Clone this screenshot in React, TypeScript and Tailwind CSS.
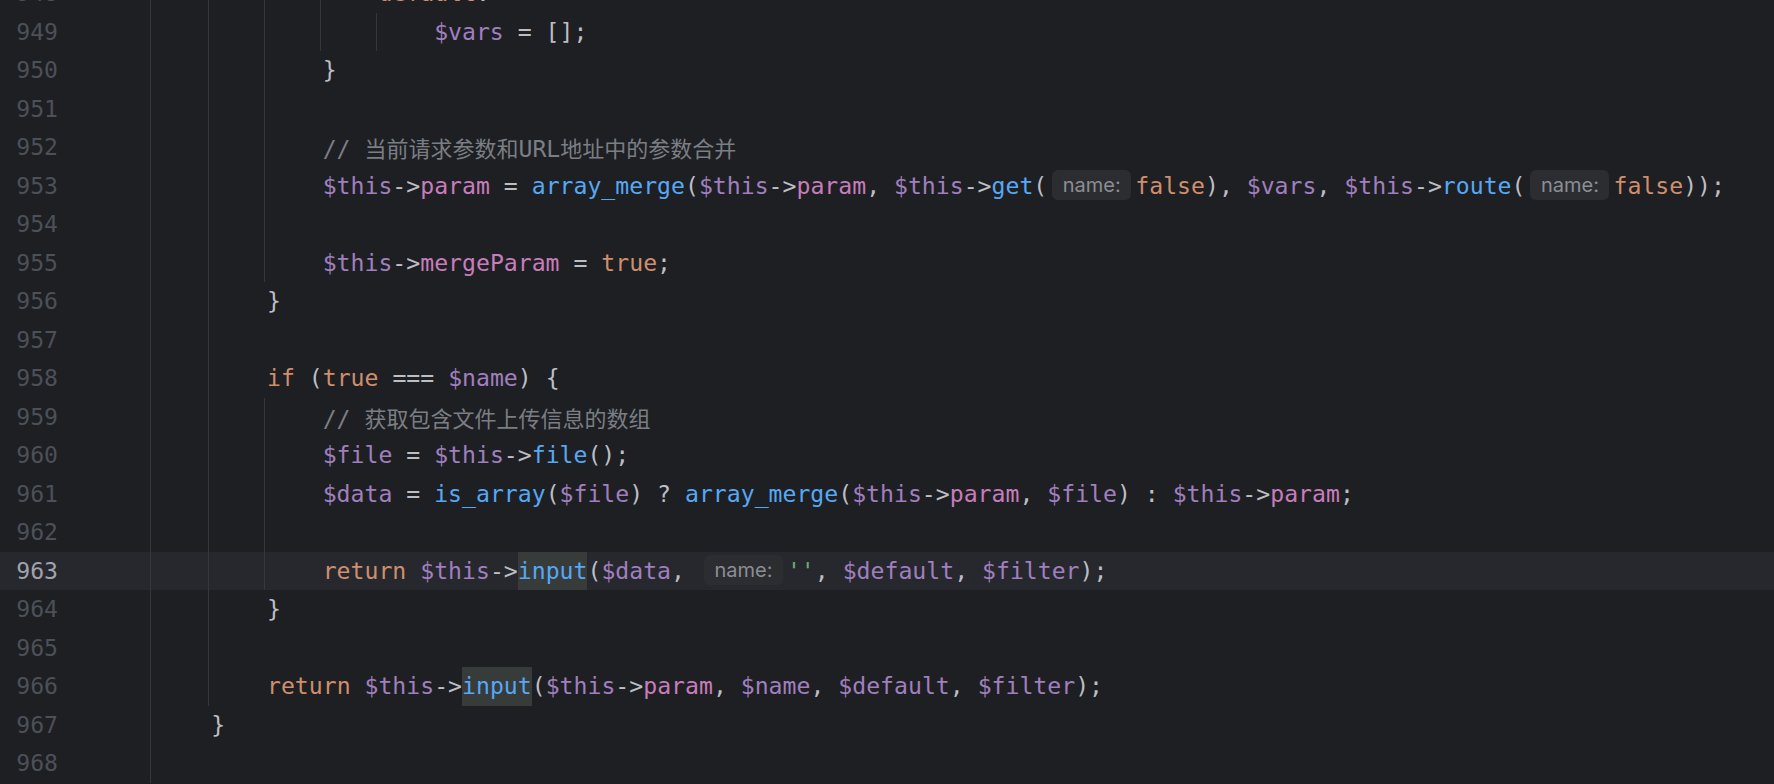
import React from 'react'

type Kind = 'p' | 'k' | 'v' | 'f' | 'fn' | 'fh' | 'c' | 'cj' | 's' | 'h'
type Seg = [Kind, string]

interface Line {
  no: number
  indent: number
  segs: Seg[]
  guides: number[]
  current?: boolean
}

const color: Record<Kind, string> = {
  p: 'text-[#bcbec4]',
  k: 'text-[#cf8e6d]',
  v: 'text-[#a07fbf]',
  f: 'text-[#c77dbb]',
  fn: 'text-[#56a8f5]',
  fh: 'text-[#56a8f5] bg-[#373b39] inline-block',
  c: 'text-[#7a7e85]',
  cj: 'text-[#7a7e85] text-[22px] font-["Noto_Sans_CJK_SC",sans-serif]',
  s: 'text-[#6aab73]',
  h: '',
}

// guide column -> left offset inside the code area
const guideLeft: Record<number, string> = {
  4: 'left-[57px]',
  8: 'left-[113px]',
  12: 'left-[169px]',
  16: 'left-[225px]',
}

const hint: Seg = ['h', 'name:']

const lines: Line[] = [
  { no: 948, indent: 16, guides: [4, 8, 12], segs: [['k', 'default'], ['p', ':']] },
  { no: 949, indent: 20, guides: [4, 8, 12, 16], segs: [['v', '$vars'], ['p', ' = [];']] },
  { no: 950, indent: 12, guides: [4, 8], segs: [['p', '}']] },
  { no: 951, indent: 0, guides: [4, 8], segs: [] },
  {
    no: 952, indent: 12, guides: [4, 8],
    segs: [['c', '// '], ['cj', '当前请求参数和'], ['c', 'URL'], ['cj', '地址中的参数合并']],
  },
  {
    no: 953, indent: 12, guides: [4, 8],
    segs: [
      ['v', '$this'], ['p', '->'], ['f', 'param'], ['p', ' = '], ['fn', 'array_merge'], ['p', '('],
      ['v', '$this'], ['p', '->'], ['f', 'param'], ['p', ', '], ['v', '$this'], ['p', '->'], ['fn', 'get'], ['p', '('],
      hint, ['k', 'false'], ['p', '), '], ['v', '$vars'], ['p', ', '], ['v', '$this'], ['p', '->'], ['fn', 'route'], ['p', '('],
      hint, ['k', 'false'], ['p', '));'],
    ],
  },
  { no: 954, indent: 0, guides: [4, 8], segs: [] },
  {
    no: 955, indent: 12, guides: [4, 8],
    segs: [['v', '$this'], ['p', '->'], ['f', 'mergeParam'], ['p', ' = '], ['k', 'true'], ['p', ';']],
  },
  { no: 956, indent: 8, guides: [4], segs: [['p', '}']] },
  { no: 957, indent: 0, guides: [4], segs: [] },
  {
    no: 958, indent: 8, guides: [4],
    segs: [['k', 'if'], ['p', ' ('], ['k', 'true'], ['p', ' === '], ['v', '$name'], ['p', ') {']],
  },
  {
    no: 959, indent: 12, guides: [4, 8],
    segs: [['c', '// '], ['cj', '获取包含文件上传信息的数组']],
  },
  {
    no: 960, indent: 12, guides: [4, 8],
    segs: [['v', '$file'], ['p', ' = '], ['v', '$this'], ['p', '->'], ['fn', 'file'], ['p', '();']],
  },
  {
    no: 961, indent: 12, guides: [4, 8],
    segs: [
      ['v', '$data'], ['p', ' = '], ['fn', 'is_array'], ['p', '('], ['v', '$file'], ['p', ') ? '],
      ['fn', 'array_merge'], ['p', '('], ['v', '$this'], ['p', '->'], ['f', 'param'], ['p', ', '],
      ['v', '$file'], ['p', ') : '], ['v', '$this'], ['p', '->'], ['f', 'param'], ['p', ';'],
    ],
  },
  { no: 962, indent: 0, guides: [4, 8], segs: [] },
  {
    no: 963, indent: 12, guides: [4, 8], current: true,
    segs: [
      ['k', 'return'], ['p', ' '], ['v', '$this'], ['p', '->'], ['fh', 'input'], ['p', '('], ['v', '$data'], ['p', ', '],
      hint, ['s', "''"], ['p', ', '], ['v', '$default'], ['p', ', '], ['v', '$filter'], ['p', ');'],
    ],
  },
  { no: 964, indent: 8, guides: [4], segs: [['p', '}']] },
  { no: 965, indent: 0, guides: [4], segs: [] },
  {
    no: 966, indent: 8, guides: [4],
    segs: [
      ['k', 'return'], ['p', ' '], ['v', '$this'], ['p', '->'], ['fh', 'input'], ['p', '('], ['v', '$this'], ['p', '->'],
      ['f', 'param'], ['p', ', '], ['v', '$name'], ['p', ', '], ['v', '$default'], ['p', ', '], ['v', '$filter'], ['p', ');'],
    ],
  },
  { no: 967, indent: 4, guides: [], segs: [['p', '}']] },
  { no: 968, indent: 0, guides: [], segs: [] },
]

const Hint: React.FC<{ text: string }> = ({ text }) => (
  <span className="inline-flex items-center justify-center align-middle ml-[5px] mr-[4px] w-[79px] h-[30px] rounded-[6px] bg-[#2b2d30] text-[#8b8e94] text-[20px] leading-none font-['Inter',sans-serif] -translate-y-[2px]">
    {text}
  </span>
)

const CodeLine: React.FC<{ line: Line }> = ({ line }) => (
  <div className={`flex h-[38.5px] ${line.current ? 'bg-[#26282e]' : ''}`}>
    <div
      className={`w-[150px] shrink-0 text-right pr-[92px] leading-[38.5px] ${
        line.current ? 'text-[#a1a3ab]' : 'text-[#4b5059]'
      }`}
    >
      {line.no}
    </div>
    <div className="relative flex-1 border-l border-[#35373c] pl-[4.5px] leading-[38.5px] whitespace-pre">
      {line.guides.map((g) => (
        <span key={g} className={`absolute top-0 bottom-0 w-px bg-[#35373c] ${guideLeft[g]}`} />
      ))}
      <span>{' '.repeat(line.indent)}</span>
      {line.segs.map(([kind, text], i) =>
        kind === 'h' ? (
          <Hint key={i} text={text} />
        ) : (
          <span key={i} className={color[kind]}>
            {text}
          </span>
        )
      )}
    </div>
  </div>
)

export default function App() {
  return (
    <div className="w-[1774px] h-[784px] overflow-hidden bg-[#1e1f22] font-['DejaVu_Sans_Mono',monospace] text-[23.15px] text-[#bcbec4]">
      <div className="mt-[-25.75px]">
        {lines.map((l) => (
          <CodeLine key={l.no} line={l} />
        ))}
      </div>
    </div>
  )
}
